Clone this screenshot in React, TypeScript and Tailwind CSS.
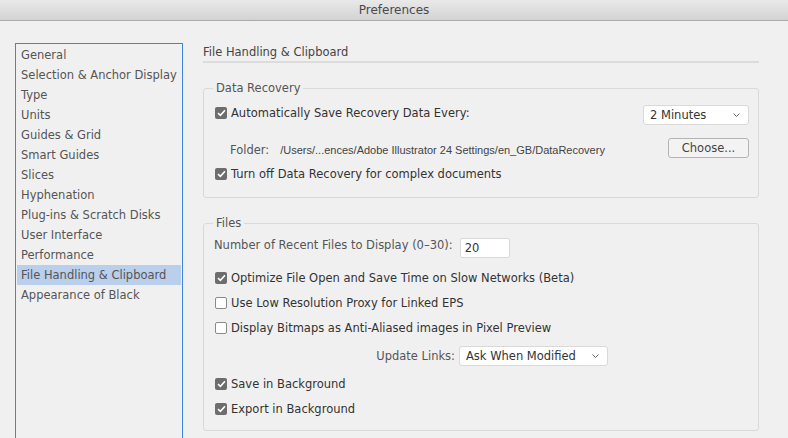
import React from 'react';

const categories = [
  'General',
  'Selection & Anchor Display',
  'Type',
  'Units',
  'Guides & Grid',
  'Smart Guides',
  'Slices',
  'Hyphenation',
  'Plug-ins & Scratch Disks',
  'User Interface',
  'Performance',
  'File Handling & Clipboard',
  'Appearance of Black',
];

function Chevron() {
  return (
    <svg width="7" height="4" viewBox="0 0 7 4" className="shrink-0">
      <polyline points="0.5,0.5 3.5,3.5 6.5,0.5" fill="none" stroke="#666" strokeWidth="1" />
    </svg>
  );
}

function Checkbox({ checked, label }: { checked: boolean; label: string }) {
  return (
    <div className="flex h-[20px] items-center">
      {checked ? (
        <span className="flex h-[12px] w-[12px] items-center justify-center rounded-[2px] bg-[#6d6d6d]">
          <svg width="9" height="8" viewBox="0 0 9 8">
            <polyline points="1,4.2 3.4,6.4 8,1.2" fill="none" stroke="#fff" strokeWidth="1.6" />
          </svg>
        </span>
      ) : (
        <span className="h-[12px] w-[12px] rounded-[2px] border border-[#8a8a8a] bg-white" />
      )}
      <span className="ml-[4px] text-[#333]">{label}</span>
    </div>
  );
}

function Select({ value, width }: { value: string; width: string }) {
  return (
    <div
      className={`flex h-[20px] ${width} items-center justify-between rounded-[3px] border border-[#d9d9d9] bg-white pl-[6px] pr-[8px] text-[#333]`}
    >
      <span>{value}</span>
      <Chevron />
    </div>
  );
}

export default function App() {
  return (
    <div
      className="h-[438px] w-[788px] overflow-hidden bg-[#f0f0f0] text-[11.5px] leading-[20px]"
      style={{ fontFamily: '"DejaVu Sans", "Lucida Grande", sans-serif' }}
    >
      {/* Title bar */}
      <div className="flex h-[21px] items-center justify-center border-b border-[#a9a9a9] bg-gradient-to-b from-[#e9e9e9] to-[#d3d3d3] text-[12px] text-[#4a4a4a]">
        Preferences
      </div>

      <div className="flex pl-[15px] pt-[22px]">
        {/* Category list */}
        <div className="h-[420px] w-[168px] shrink-0 border border-[#3d85e0] px-[1px] pt-[1px]">
          {categories.map((c) => (
            <div
              key={c}
              className={`h-[20px] pl-[4px] text-[#555] ${c === 'File Handling & Clipboard' ? 'bg-[#b9cfec]' : ''}`}
            >
              {c}
            </div>
          ))}
        </div>

        {/* Settings panel */}
        <div className="ml-[20px] w-[556px]">
          <div className="h-[20px] border-b-2 border-[#dcdcdc] leading-[18px] text-[#444]">
            File Handling &amp; Clipboard
          </div>

          {/* Data Recovery */}
          <fieldset className="mt-[17px] rounded-[3px] border border-[#d9d9d9] pb-[13px] pl-[11px] pr-[9px]">
            <legend className="ml-[-2px] px-[3px] leading-[16px] text-[#555]">Data Recovery</legend>
            <div className="mt-[7px] flex items-start justify-between">
              <Checkbox checked label="Automatically Save Recovery Data Every:" />
              <div className="mt-[2px]">
                <Select value="2 Minutes" width="w-[106px]" />
              </div>
            </div>
            <div className="mt-[15px] flex items-start justify-between">
              <div className="flex h-[20px] items-center pl-[15px]">
                <span className="text-[#555]">Folder:</span>
                <span
                  className="ml-[11px] text-[11px] text-[#444]"
                  style={{ fontFamily: '"Liberation Sans", Arial, sans-serif' }}
                >
                  /Users/...ences/Adobe Illustrator 24 Settings/en_GB/DataRecovery
                </span>
              </div>
              <div className="mt-[-2px] flex h-[20px] w-[81px] items-center justify-center rounded-[3px] border border-[#b4b4b4] bg-[#f3f3f3] text-[#444]">
                Choose...
              </div>
            </div>
            <div className="mt-[4px]">
              <Checkbox checked label="Turn off Data Recovery for complex documents" />
            </div>
          </fieldset>

          {/* Files */}
          <fieldset className="mt-[17px] rounded-[3px] border border-[#d9d9d9] pb-[11px] pl-[11px] pr-[9px]">
            <legend className="ml-[-2px] px-[3px] leading-[16px] text-[#555]">Files</legend>
            <div className="mt-[4px] flex items-start">
              <span className="ml-[-1px] text-[#555]">Number of Recent Files to Display (0–30):</span>
              <div className="ml-[7px] mt-[3px] flex h-[20px] w-[50px] items-center rounded-[2px] border border-[#d9d9d9] bg-white pl-[4px] text-[#333]">
                20
              </div>
            </div>
            <div className="mt-[10px]">
              <Checkbox checked label="Optimize File Open and Save Time on Slow Networks (Beta)" />
            </div>
            <div className="mt-[5px]">
              <Checkbox checked={false} label="Use Low Resolution Proxy for Linked EPS" />
            </div>
            <div className="mt-[5px]">
              <Checkbox checked={false} label="Display Bitmaps as Anti-Aliased images in Pixel Preview" />
            </div>
            <div className="mt-[8px] flex items-center">
              <span className="w-[240px] text-right text-[#555]">Update Links:</span>
              <div className="ml-[4px]">
                <Select value="Ask When Modified" width="w-[149px]" />
              </div>
            </div>
            <div className="mt-[8px]">
              <Checkbox checked label="Save in Background" />
            </div>
            <div className="mt-[5px]">
              <Checkbox checked label="Export in Background" />
            </div>
          </fieldset>
        </div>
      </div>
    </div>
  );
}
